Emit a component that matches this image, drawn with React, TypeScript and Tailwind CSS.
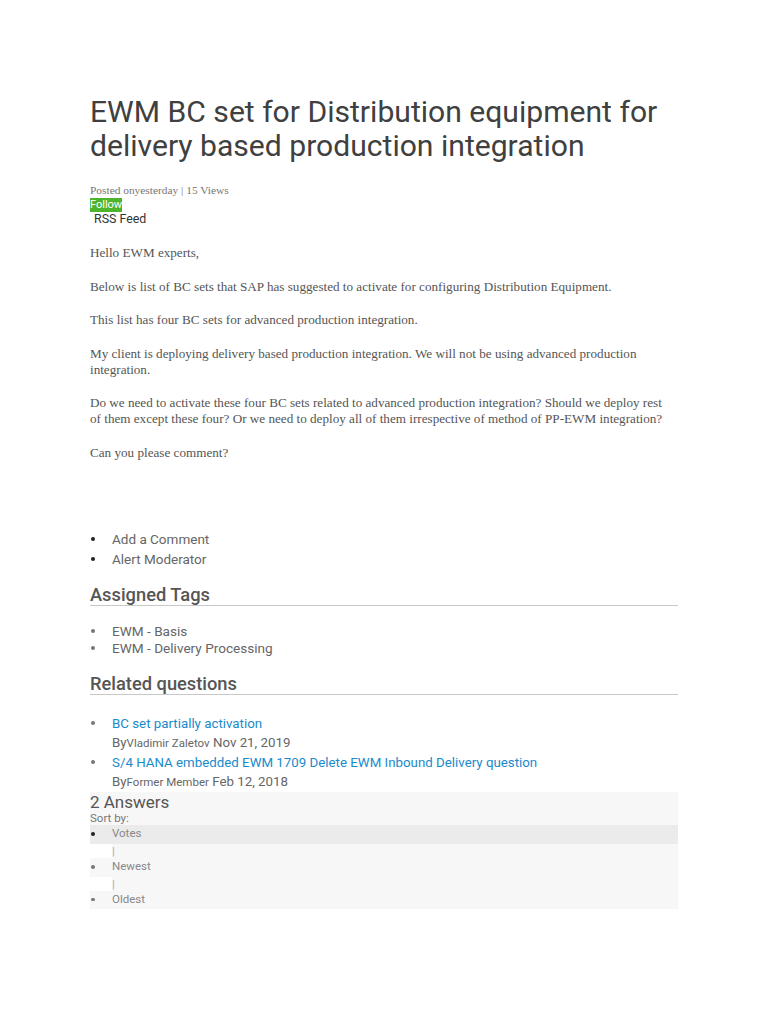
const serif = "font-['Liberation_Serif','Times_New_Roman',serif]"
const sans = "font-['Roboto','Liberation_Sans',sans-serif]"

function Dot({ dark, h }: { dark?: boolean; h: string }) {
  return (
    <span className={`w-[22px] shrink-0 self-start flex items-center pl-[1px] ${h}`}>
      <span
        className={
          dark
            ? 'block w-[4px] h-[4px] rounded-full bg-[#222]'
            : 'block w-[3.5px] h-[3.5px] rounded-full bg-[#777]'
        }
      />
    </span>
  )
}

const paragraphs = [
  ['Hello EWM experts,'],
  ['Below is list of BC sets that SAP has suggested to activate for configuring Distribution Equipment.'],
  ['This list has four BC sets for advanced production integration.'],
  [
    'My client is deploying delivery based production integration. We will not be using advanced production',
    'integration.',
  ],
  [
    'Do we need to activate these four BC sets related to advanced production integration? Should we deploy rest',
    'of them except these four? Or we need to deploy all of them irrespective of method of PP-EWM integration?',
  ],
  ['Can you please comment?'],
]

const related = [
  { title: 'BC set partially activation', author: 'Vladimir Zaletov', date: 'Nov 21, 2019' },
  { title: 'S/4 HANA embedded EWM 1709 Delete EWM Inbound Delivery question', author: 'Former Member', date: 'Feb 12, 2018' },
]

export default function App() {
  return (
    <div className="min-h-[1024px] bg-white">
      <div className={`w-[588px] ml-[90px] pt-[95px] pb-[100px] ${sans}`}>
        {/* Title */}
        <h1 className="text-[30.1px] leading-[34px] text-[#404040] font-normal">
          EWM BC set for Distribution equipment for
          <br />
          delivery based production integration
        </h1>

        {/* Meta */}
        <div className={`mt-[19px] text-[11.4px] leading-[16px] text-[#777] ${serif}`}>
          Posted onyesterday | 15 Views
        </div>
        <div className="text-[11px] leading-[14px]">
          <span className="inline-block bg-[#4cb52c] text-white">Follow</span>
        </div>
        <div className="text-[12.4px] leading-[14px] text-[#333] pl-[4px]">RSS Feed</div>

        {/* Body */}
        <div className={`mt-[19px] text-[13.15px] leading-[16px] text-[#555] ${serif} flex flex-col gap-[17.5px]`}>
          {paragraphs.map((p, i) => (
            <p key={i}>
              {p.map((line, j) => (
                <span key={j} className="block whitespace-nowrap">
                  {line}
                </span>
              ))}
            </p>
          ))}
        </div>

        {/* Actions */}
        <ul className="mt-[68px] text-[13.5px] leading-[20px] text-[#666]">
          {['Add a Comment', 'Alert Moderator'].map((t) => (
            <li key={t} className="flex">
              <Dot dark h="h-[20px]" />
              <span>{t}</span>
            </li>
          ))}
        </ul>

        {/* Assigned Tags */}
        <h2 className="mt-[16px] text-[18.3px] leading-[20px] font-medium text-[#555] border-b border-[#c8c8c8]">
          Assigned Tags
        </h2>
        <ul className="mt-[17px] text-[13.6px] leading-[17px] text-[#666]">
          {['EWM - Basis', 'EWM - Delivery Processing'].map((t) => (
            <li key={t} className="flex">
              <Dot h="h-[17px]" />
              <span>{t}</span>
            </li>
          ))}
        </ul>

        {/* Related questions */}
        <h2 className="mt-[17px] text-[18.3px] leading-[20px] font-medium text-[#555] border-b border-[#c8c8c8]">
          Related questions
        </h2>
        <ul className="mt-[19px] text-[13.3px] leading-[19px]">
          {related.map((r) => (
            <li key={r.title} className="flex">
              <Dot h="h-[19px]" />
              <div>
                <div className="text-[#1a8acb]">{r.title}</div>
                <div className="text-[#666]">
                  By<span className="text-[11.5px]">{r.author}</span> {r.date}
                </div>
              </div>
            </li>
          ))}
        </ul>

        {/* Answers */}
        <div>
          <div className="bg-[#f7f7f7] text-[17px] leading-[20px] text-[#555]">2 Answers</div>
          <div className="bg-[#f7f7f7] text-[11.5px] leading-[13px] text-[#777]">Sort by:</div>
          <ul className="text-[11.5px] text-[#888]">
            <li className="flex items-center h-[19px] bg-[#ebebeb]">
              <Dot dark h="h-[19px]" />
              <span>Votes</span>
            </li>
            <li className="ml-[22px] h-[14px] leading-[14px] bg-[#f7f7f7] text-[#aaa]">|</li>
            <li className="flex items-center h-[19px] bg-[#f7f7f7]">
              <Dot h="h-[19px]" />
              <span>Newest</span>
            </li>
            <li className="ml-[22px] h-[14px] leading-[14px] bg-[#f7f7f7] text-[#aaa]">|</li>
            <li className="flex items-center h-[18px] bg-[#f7f7f7]">
              <Dot h="h-[18px]" />
              <span>Oldest</span>
            </li>
          </ul>
        </div>
      </div>
    </div>
  )
}
